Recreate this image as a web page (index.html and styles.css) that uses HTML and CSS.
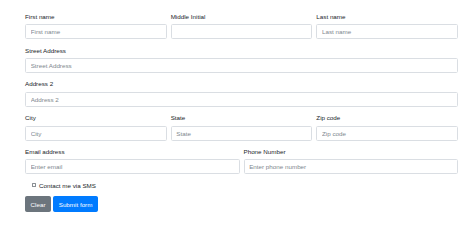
FILE: index.html
```html
<!DOCTYPE html>
<html lang="en">
<head>
    <meta charset="UTF-8">
    <meta name="viewport" content="width=device-width, initial-scale=1.0">
    <title>Address Form</title>
    <link rel="stylesheet" href="styles.css">
</head>
<body>
    <form class="form">
        <div class="form-row cols-3">
            <div class="form-group">
                <label for="first-name">First name</label>
                <input type="text" id="first-name" placeholder="First name">
            </div>
            <div class="form-group">
                <label for="middle">Middle Initial</label>
                <input type="text" id="middle">
            </div>
            <div class="form-group">
                <label for="last-name">Last name</label>
                <input type="text" id="last-name" placeholder="Last name">
            </div>
        </div>

        <div class="form-group">
            <label for="street">Street Address</label>
            <input type="text" id="street" placeholder="Street Address">
        </div>

        <div class="form-group">
            <label for="address2">Address 2</label>
            <input type="text" id="address2" placeholder="Address 2">
        </div>

        <div class="form-row cols-3">
            <div class="form-group">
                <label for="city">City</label>
                <input type="text" id="city" placeholder="City">
            </div>
            <div class="form-group">
                <label for="state">State</label>
                <input type="text" id="state" placeholder="State">
            </div>
            <div class="form-group">
                <label for="zip">Zip code</label>
                <input type="text" id="zip" placeholder="Zip code">
            </div>
        </div>

        <div class="form-row cols-2">
            <div class="form-group">
                <label for="email">Email address</label>
                <input type="email" id="email" placeholder="Enter email">
            </div>
            <div class="form-group">
                <label for="phone">Phone Number</label>
                <input type="tel" id="phone" placeholder="Enter phone number">
            </div>
        </div>

        <div class="form-check">
            <input type="checkbox" id="sms">
            <label for="sms">Contact me via SMS</label>
        </div>

        <div class="actions">
            <button type="reset" class="btn btn-secondary">Clear</button>
            <button type="submit" class="btn btn-primary">Submit form</button>
        </div>
    </form>
</body>
</html>
```

FILE: styles.css
```css
body {
    margin: 0;
    font-family: "Liberation Sans", Arial, sans-serif;
    font-size: 6.25px;
    line-height: 1.5;
    color: #212529;
    background-color: #fff;
}
.form {
    width: 433px;
    padding: 12px 0 0 25px;
}
.form-row {
    display: grid;
    gap: 4px;
}
.cols-3 { grid-template-columns: repeat(3, 1fr); }
.cols-2 { grid-template-columns: repeat(2, 1fr); }
.form-group {
    margin-bottom: 6.25px;
}
.form-group label {
    display: block;
    margin-bottom: 3.1px;
}
.form-group input {
    display: block;
    box-sizing: border-box;
    width: 100%;
    height: 15px;
    padding: 2.3px 4.7px;
    font-family: inherit;
    font-size: 6.25px;
    line-height: 1.5;
    color: #495057;
    background-color: #fff;
    border: 1px solid #dadee3;
    border-radius: 1.6px;
    outline: none;
}
.form-group input::placeholder {
    color: #80878e;
}
.form-check {
    display: flex;
    align-items: center;
    gap: 3px;
    height: 9.4px;
    margin: 0 0 6.25px 7px;
}
.form-check input {
    appearance: none;
    box-sizing: border-box;
    width: 4px;
    height: 4px;
    margin: 0;
    background-color: #fff;
    border: 1px solid #8a8f94;
    border-radius: 0.5px;
}
.actions {
    display: flex;
    gap: 2px;
}
.btn {
    padding: 2.3px 4.6px;
    font-family: inherit;
    font-size: 6.25px;
    line-height: 1.5;
    color: #fff;
    border: 1px solid transparent;
    border-radius: 1.6px;
    cursor: pointer;
}
.btn-secondary { background-color: #6c757d; border-color: #6c757d; }
.btn-primary { background-color: #007bff; border-color: #007bff; }
```
